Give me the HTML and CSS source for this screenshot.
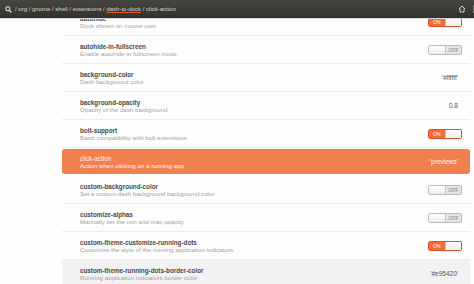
FILE: index.html
```html
<!DOCTYPE html>
<html lang="en">
<head>
  <meta charset="UTF-8">
  <title>dconf Editor</title>
  <link rel="stylesheet" href="styles.css">
</head>
<body>

<!-- Path Bar -->
<div id="path-bar">
  <svg class="search-icon" width="7" height="7" viewBox="0 0 7 7">
    <circle cx="2.8" cy="2.8" r="2" fill="none" stroke="#d8d4cc" stroke-width="1.1"/>
    <line x1="4.3" y1="4.3" x2="6.5" y2="6.5" stroke="#d8d4cc" stroke-width="1.4"/>
  </svg>
  <span class="path">/ org / gnome / shell / extensions / <span class="path-current">dash-to-dock</span> / click-action</span>
  <div class="path-tools">
    <svg width="8" height="8" viewBox="0 0 8 8">
      <path d="M1 4 L4 1 L7 4 M2 3.5 V7 H6 V3.5" fill="none" stroke="#d8d4cc" stroke-width="1"/>
    </svg>
    <span class="tool-sep"></span>
  </div>
</div>

<!-- Key List -->
<div id="key-list">
  <div class="key-row">
    <div class="key-text">
      <div class="key-name">autohide</div>
      <div class="key-desc">Dock shown on mouse over</div>
    </div>
    <div class="switch on"><span class="switch-label">ON</span><span class="switch-knob"></span></div>
  </div>
  <div class="key-row">
    <div class="key-text">
      <div class="key-name">autohide-in-fullscreen</div>
      <div class="key-desc">Enable autohide in fullscreen mode.</div>
    </div>
    <div class="switch off"><span class="switch-knob"></span><span class="switch-label">OFF</span></div>
  </div>
  <div class="key-row">
    <div class="key-text">
      <div class="key-name">background-color</div>
      <div class="key-desc">Dash background color.</div>
    </div>
    <div class="key-value">'#ffffff'</div>
  </div>
  <div class="key-row">
    <div class="key-text">
      <div class="key-name">background-opacity</div>
      <div class="key-desc">Opacity of the dash background</div>
    </div>
    <div class="key-value">0.8</div>
  </div>
  <div class="key-row">
    <div class="key-text">
      <div class="key-name">bolt-support</div>
      <div class="key-desc">Basic compatibility with bolt extensions</div>
    </div>
    <div class="switch on"><span class="switch-label">ON</span><span class="switch-knob"></span></div>
  </div>
  <div class="key-row selected">
    <div class="key-text">
      <div class="key-name">click-action</div>
      <div class="key-desc">Action when clicking on a running app</div>
    </div>
    <div class="key-value">'previews'</div>
  </div>
  <div class="key-row">
    <div class="key-text">
      <div class="key-name">custom-background-color</div>
      <div class="key-desc">Set a custom dash background background color</div>
    </div>
    <div class="switch off"><span class="switch-knob"></span><span class="switch-label">OFF</span></div>
  </div>
  <div class="key-row">
    <div class="key-text">
      <div class="key-name">customize-alphas</div>
      <div class="key-desc">Manually set the min and max opacity</div>
    </div>
    <div class="switch off"><span class="switch-knob"></span><span class="switch-label">OFF</span></div>
  </div>
  <div class="key-row">
    <div class="key-text">
      <div class="key-name">custom-theme-customize-running-dots</div>
      <div class="key-desc">Customize the style of the running application indicators.</div>
    </div>
    <div class="switch on"><span class="switch-label">ON</span><span class="switch-knob"></span></div>
  </div>
  <div class="key-row hover">
    <div class="key-text">
      <div class="key-name">custom-theme-running-dots-border-color</div>
      <div class="key-desc">Running application indicators border color</div>
    </div>
    <div class="key-value">'#e95420'</div>
  </div>
</div>

</body>
</html>
```

FILE: styles.css
```css
body {
  font-family: "Liberation Sans", Arial, sans-serif;
  margin: 0;
  padding: 0;
  background-color: #fdfdfd;
  overflow: hidden;
}

#path-bar {
  position: absolute;
  top: 0;
  left: 0;
  right: 0;
  height: 18px;
  display: flex;
  align-items: center;
  padding: 0 0 0 5px;
  background: linear-gradient(#46453f, #33322e);
  border-bottom: 1px solid #d9d7d2;
  color: #dcd8cf;
  font-size: 6px;
  z-index: 2;
}

.search-icon {
  margin-right: 3px;
}

.path-current {
  text-decoration: underline;
  text-decoration-color: #e95420;
}

.path-tools {
  margin-left: auto;
  display: flex;
  align-items: center;
  gap: 7px;
}

.tool-sep {
  width: 1px;
  height: 8px;
  background-color: #77756e;
}

#key-list {
  display: flex;
  flex-direction: column;
  margin: 8px 4px 0 62px;
}

.key-row {
  height: 27px;
  display: flex;
  align-items: center;
  padding: 0 8px 0 18px;
  border-bottom: 1px solid #ececec;
}

.key-name {
  font-size: 6.3px;
  color: #4a4a48;
  font-weight: bold;
  line-height: 7px;
}

.key-desc {
  font-size: 6.2px;
  color: #a4a4a2;
  line-height: 7px;
}

.key-text {
  flex-grow: 1;
}

.key-value {
  font-size: 6.5px;
  color: #555;
  margin-right: 4px;
}

.key-row.selected {
  background-color: #f0804f;
  border-radius: 3px;
  border-bottom: none;
  height: 25px;
  margin: 1px 0 2px;
}

.key-row.selected .key-name,
.key-row.selected .key-desc,
.key-row.selected .key-value {
  color: #fff5ef;
  font-weight: normal;
}

.key-row.hover {
  background-color: #f2f2f2;
  border-bottom: none;
}

.switch {
  width: 34px;
  height: 10px;
  display: flex;
  border-radius: 2px;
  overflow: hidden;
  border: 1px solid #bdbcb8;
  box-sizing: border-box;
}

.switch-label {
  flex: 1;
  font-size: 5px;
  line-height: 8px;
  text-align: center;
}

.switch-knob {
  flex: 1;
  background: linear-gradient(#ffffff, #ececea);
}

.switch.on {
  border-color: #d9542a;
}

.switch.on .switch-label {
  background-color: #ee6c3a;
  color: #fff;
}

.switch.on .switch-knob {
  border-left: 1px solid #c9c7c2;
}

.switch.off .switch-label {
  background-color: #e4e3e0;
  color: #888;
}

.switch.off .switch-knob {
  border-right: 1px solid #c9c7c2;
}
```
